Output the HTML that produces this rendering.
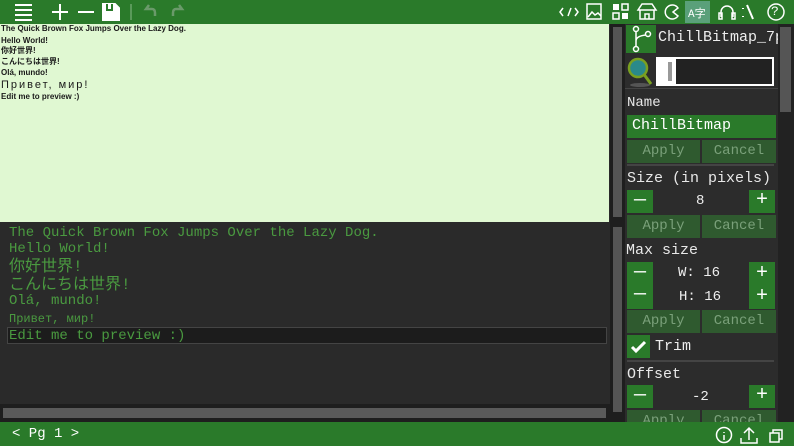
<!DOCTYPE html>
<html><head><meta charset="utf-8"><style>
*{margin:0;padding:0;box-sizing:border-box}
body{width:794px;height:446px;overflow:hidden;background:#2a2a2a;font-family:"Liberation Mono","Noto Sans CJK JP",monospace;position:relative}
.a{position:absolute}
.g{background:#2a7a2a}
.btn{position:absolute;background:#2f5a2f;color:#7aa07a;font-size:14px;text-align:center;line-height:22px}
.lbl{position:absolute;color:#e8e8e8;font-size:14px;left:627px}
.pm{position:absolute;background:#2a7a2a;color:#fff;font-size:20px;text-align:center;line-height:22px;width:26px;height:23px}
.tx{position:absolute;left:9px;color:#4a9a40;font-size:14px;white-space:pre;line-height:16px}
.pv{position:absolute;left:1px;color:#1a1a1a;font-size:8px;font-weight:bold;font-family:"Liberation Sans","Noto Sans CJK JP",sans-serif;white-space:pre;line-height:10px}
</style></head><body>
<div class="a g" style="left:0;top:0;width:794px;height:24px"></div>
<svg class="a" style="left:0;top:0" width="794" height="24" fill="none" stroke="#fff" stroke-width="2">
<path d="M15 5h17M15 10h17M15 15h17M15 20h17"/>
<path d="M52 12h16M60 4v16M78 12h16"/>
<path d="M103 4h12l4 4v12h-16z" fill="#fff"/><path d="M107 4v6h5V4" stroke="#2a7a2a"/>
<path d="M131 4v16" stroke="#5a9a5a"/>
<path d="M152 9h-6l3-4M146 9h6q3 0 3 4v3" stroke="#6a9a6a" stroke-width="2.5"/>
<path d="M176 9h6l-3-4M182 9h-6q-3 0-3 4v3" stroke="#6a9a6a" stroke-width="2.5"/>
<path d="M563 8l-3 4 3 4M568 16l3-8M575 8l3 4-3 4" stroke-width="1.5"/>
<rect x="587" y="4" width="14" height="15" stroke-width="1.5"/><path d="M588 17l4-5 3 3 3-2 3 3" stroke-width="1.5"/>
<rect x="613" y="4" width="6" height="6" fill="#fff" stroke="none"/><rect x="622" y="4" width="6" height="6" stroke-width="1.5"/><rect x="613" y="13" width="6" height="6" stroke-width="1.5"/><rect x="622" y="13" width="6" height="6" fill="#fff" stroke="none"/>
<path d="M638 10l4-6h10l4 6zM640 10v9h14v-9M645 19v-5h4v5" stroke-width="1.5"/>
<path d="M678 8a7 7 0 1 0 0 8l-5-4z" stroke-width="1.5"/>
<rect x="685" y="1" width="25" height="22" fill="#5aa07a" stroke="none"/>
<path d="M721 17v-5a6 6 0 0 1 12 0v5M719 13h3v6h-3zM732 13h3v6h-3z" stroke-width="1.5"/>
<path d="M743 8v1M743 16v1M747 5l6 14" stroke-width="2"/>
<circle cx="776" cy="12" r="8" stroke-width="1.5"/>
</svg>
<div class="a" style="left:688px;top:5px;color:#fff;font-size:11px">A字</div>
<div class="a" style="left:771px;top:4px;color:#fff;font-size:13px">?</div>
<div class="a" style="left:0;top:24px;width:609px;height:198px;background:#e0f8d2"></div>
<div class="pv" style="top:24px">The Quick Brown Fox Jumps Over the Lazy Dog.</div>
<div class="pv" style="top:36px">Hello World!</div>
<div class="pv" style="top:46px">你好世界!</div>
<div class="pv" style="top:57px">こんにちは世界!</div>
<div class="pv" style="top:68px">Olá, mundo!</div>
<div class="pv" style="top:79px;font-size:11px;letter-spacing:2px;font-weight:normal;line-height:12px">Привет, мир!</div>
<div class="pv" style="top:92px">Edit me to preview :)</div>
<div class="a" style="left:610px;top:24px;width:15px;height:398px;background:#1e1e1e"></div>
<div class="a" style="left:613px;top:27px;width:9px;height:190px;background:#555"></div>
<div class="a" style="left:613px;top:227px;width:9px;height:185px;background:#555"></div>
<div class="tx" style="top:225px">The Quick Brown Fox Jumps Over the Lazy Dog.</div>
<div class="tx" style="top:241px">Hello World!</div>
<div class="tx" style="top:258px;font-size:16px;line-height:18px">你好世界!</div>
<div class="tx" style="top:276px;font-size:16px;line-height:18px">こんにちは世界!</div>
<div class="tx" style="top:293px">Olá, mundo!</div>
<div class="tx" style="top:311px;font-size:12px">Привет, мир!</div>
<div class="a" style="left:7px;top:327px;width:600px;height:17px;background:#1c1c1c;border:1px solid #444"></div>
<div class="tx" style="top:328px">Edit me to preview :)</div>
<div class="a" style="left:0;top:404px;width:610px;height:18px;background:#1e1e1e"></div>
<div class="a" style="left:3px;top:408px;width:603px;height:10px;background:#5a5a5a"></div>
<div class="a g" style="left:0;top:422px;width:794px;height:24px"></div>
<div class="a" style="left:12px;top:426px;color:#fff;font-size:14px;white-space:pre">&lt; Pg 1 &gt;</div>
<svg class="a" style="left:710px;top:424px" width="84" height="22" fill="none" stroke="#fff" stroke-width="1.5">
<circle cx="14" cy="11" r="7.5"/><path d="M14 8v1M14 11v5"/>
<path d="M39 4v12M34 9l5-5 5 5M31 14v5h16v-5"/>
<rect x="60" y="9" width="9" height="9"/><path d="M63 9V6h9v9h-3"/>
</svg>
<div class="a" style="left:778px;top:24px;width:16px;height:398px;background:#222"></div>
<div class="a" style="left:780px;top:27px;width:11px;height:85px;background:#555"></div>
<div class="a" style="left:625px;top:24px;width:153px;height:398px;background:#2c2c2c"></div>
<div class="a g" style="left:626px;top:25px;width:30px;height:28px"></div>
<svg class="a" style="left:626px;top:25px" width="30" height="28" fill="none" stroke="#fff" stroke-width="1.5"><circle cx="10" cy="4" r="2.5"/><circle cx="10" cy="24" r="2.5"/><circle cx="22" cy="9" r="2.5"/><path d="M10 7v14M10 16q0-5 10-6"/></svg>
<div class="a" style="left:658px;top:29px;color:#eee;font-size:15px;white-space:nowrap;width:120px;overflow:hidden">ChillBitmap_7p</div>
<svg class="a" style="left:626px;top:56px" width="30" height="32"><ellipse cx="14" cy="29" rx="10" ry="2" fill="#555"/><path d="M17 17l8 11" stroke="#7aa020" stroke-width="3"/><circle cx="12" cy="12" r="9" fill="#2a8a8a" stroke="#7aa020" stroke-width="2.5"/></svg>
<div class="a" style="left:656px;top:57px;width:118px;height:29px;background:#222;border:2px solid #fff"></div>
<div class="a" style="left:658px;top:59px;width:18px;height:25px;background:#fff"></div>
<div class="a" style="left:668px;top:62px;width:4px;height:19px;background:#999"></div>
<div class="a" style="left:625px;top:88px;width:153px;height:1px;background:#444"></div>
<div class="lbl" style="top:95px">Name</div>
<div class="a g" style="left:627px;top:115px;width:149px;height:23px"></div>
<div class="a" style="left:632px;top:117px;color:#fff;font-size:15px">ChillBitmap</div>
<div class="btn" style="left:627px;top:140px;width:73px;height:23px">Apply</div>
<div class="btn" style="left:702px;top:140px;width:74px;height:23px">Cancel</div>
<div class="a" style="left:627px;top:164px;width:147px;height:2px;background:#444"></div>
<div class="lbl" style="top:170px;font-size:15px">Size (in pixels)</div>
<div class="pm" style="left:627px;top:190px">—</div><div class="a" style="left:696px;top:193px;color:#eee;font-size:14px">8</div><div class="pm" style="left:749px;top:190px">+</div>
<div class="btn" style="left:627px;top:215px;width:73px;height:23px">Apply</div>
<div class="btn" style="left:702px;top:215px;width:74px;height:23px">Cancel</div>
<div class="lbl" style="top:242px;left:626px;font-size:15px">Max size</div>
<div class="pm" style="left:627px;top:262px;height:47px;line-height:22px">—<br>—</div>
<div class="a" style="left:678px;top:265px;color:#eee;font-size:14px;white-space:pre">W: 16</div>
<div class="a" style="left:679px;top:289px;color:#eee;font-size:14px;white-space:pre">H: 16</div>
<div class="pm" style="left:749px;top:262px;height:47px;line-height:23px">+<br>+</div>
<div class="btn" style="left:627px;top:310px;width:73px;height:23px">Apply</div>
<div class="btn" style="left:702px;top:310px;width:74px;height:23px">Cancel</div>
<div class="a g" style="left:627px;top:335px;width:23px;height:23px"></div>
<svg class="a" style="left:627px;top:335px" width="23" height="23"><path d="M5 12l4 4 9-9" stroke="#fff" stroke-width="3" fill="none"/></svg>
<div class="a" style="left:655px;top:338px;color:#eee;font-size:15px">Trim</div>
<div class="a" style="left:627px;top:360px;width:147px;height:2px;background:#444"></div>
<div class="lbl" style="top:366px;font-size:15px">Offset</div>
<div class="pm" style="left:627px;top:385px">—</div><div class="a" style="left:692px;top:389px;color:#eee;font-size:14px">-2</div><div class="pm" style="left:749px;top:385px">+</div>
<div class="btn" style="left:627px;top:410px;width:73px;height:12px;overflow:hidden;line-height:22px">Apply</div>
<div class="btn" style="left:702px;top:410px;width:74px;height:12px;overflow:hidden;line-height:22px">Cancel</div>
</body></html>
